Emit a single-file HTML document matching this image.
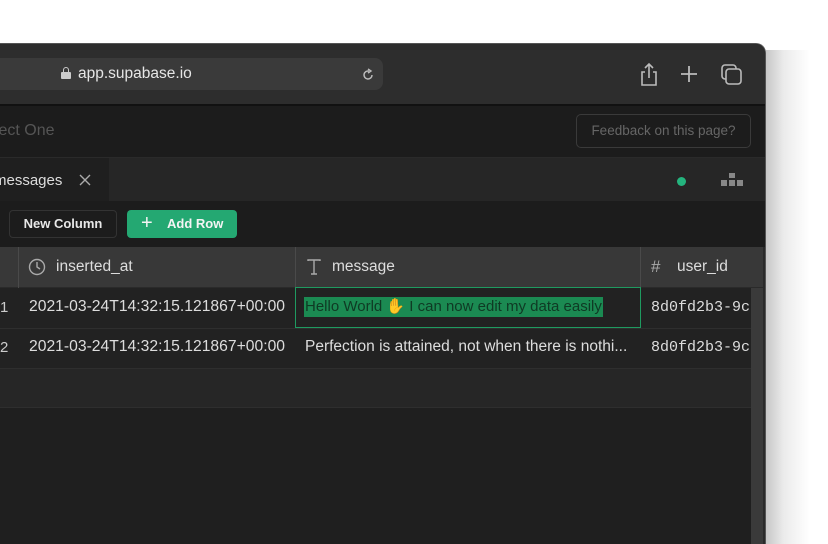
<!DOCTYPE html>
<html><head><meta charset="utf-8"><style>
*{margin:0;padding:0;box-sizing:border-box}
html,body{width:828px;height:544px;overflow:hidden}
body{background:#fff;position:relative;font-family:"Liberation Sans",sans-serif}
.win{position:absolute;left:-21px;top:43px;width:787px;height:501px;background:#1f1f1f;border-top-right-radius:10px;border:1px solid #555;border-bottom:none;overflow:hidden}
.abs{position:absolute}
</style></head><body>
<div class="abs" style="left:766px;top:50px;width:44px;height:494px;background:linear-gradient(90deg,rgba(0,0,0,.22),rgba(0,0,0,.08) 40%,rgba(0,0,0,0))"></div>
<div class="win">
 <div class="abs" style="left:0;top:0;width:786px;height:60px;background:#2d2d2d"></div>
 <div class="abs" style="left:0;top:14px;width:403px;height:32px;background:#3a3a3a;border-radius:8px"></div>
 <div class="abs" style="left:81px;top:23px;width:10px;height:12px">
  <div class="abs" style="left:2px;top:0;width:6px;height:7px;border:1.5px solid #ccc;border-radius:3px 3px 0 0"></div>
  <div class="abs" style="left:0;top:5px;width:10px;height:7px;background:#ccc;border-radius:1px"></div>
 </div>
 <div class="abs" style="left:98px;top:21px;color:#e6e6e6;font-size:15.5px">app.supabase.io</div>
 <svg class="abs" style="left:381px;top:24px" width="14" height="14" viewBox="0 0 14 14"><path d="M11 7A4 4 0 1 1 8 3.1" fill="none" stroke="#bbb" stroke-width="1.5"/><path d="M7 1l3 2-3 2" fill="none" stroke="#bbb" stroke-width="1.4"/></svg>
 <svg class="abs" style="left:659px;top:18px" width="20" height="26" viewBox="0 0 20 26"><path d="M6 10H3v13h14V10h-3M10 2v14M6 6l4-4 4 4" fill="none" stroke="#bbb" stroke-width="1.6"/></svg>
 <svg class="abs" style="left:700px;top:21px" width="18" height="18"><path d="M9 1v16M1 9h16" stroke="#bbb" stroke-width="1.8"/></svg>
 <svg class="abs" style="left:741px;top:20px" width="22" height="22"><rect x="1" y="1" width="14" height="14" rx="3" fill="none" stroke="#bbb" stroke-width="1.6"/><rect x="5" y="5" width="15" height="15" rx="3" fill="#2d2d2d" stroke="#bbb" stroke-width="1.6"/></svg>
 <div class="abs" style="left:0;top:60px;width:786px;height:2px;background:#111"></div>
 <div class="abs" style="left:0;top:62px;width:786px;height:52px;background:#1c1c1c;border-bottom:1px solid #2a2a2a"></div>
 <div class="abs" style="left:-10px;top:78px;color:#555;font-size:16px">Project One</div>
 <div class="abs" style="left:596px;top:70px;width:175px;height:34px;border:1px solid #3a3a3a;border-radius:5px;color:#666;font-size:13.5px;line-height:32px;text-align:center">Feedback on this page?</div>
 <div class="abs" style="left:0;top:114px;width:786px;height:43px;background:#262626"></div>
 <div class="abs" style="left:0;top:114px;width:129px;height:43px;background:#1f1f1f"></div>
 <div class="abs" style="left:14px;top:128px;color:#ddd;font-size:15px">messages</div>
 <svg class="abs" style="left:99px;top:130px" width="12" height="12"><path d="M1 1l10 10M11 1L1 11" stroke="#aaa" stroke-width="1.4"/></svg>
 <div class="abs" style="left:697px;top:133px;width:9px;height:9px;border-radius:50%;background:#24b47e"></div>
 <svg class="abs" style="left:740px;top:128px" width="24" height="16"><g fill="#888"><rect x="9" y="1" width="6" height="5"/><rect x="1" y="8" width="6" height="6"/><rect x="9" y="8" width="6" height="6"/><rect x="17" y="8" width="6" height="6"/></g></svg>
 <div class="abs" style="left:0;top:157px;width:786px;height:46px;background:#1c1c1c"></div>
 <div class="abs" style="left:29px;top:166px;width:108px;height:28px;border:1px solid #333;border-radius:4px;color:#e8e8e8;font-size:13px;font-weight:bold;line-height:26px;text-align:center">New Column</div>
 <div class="abs" style="left:147px;top:166px;width:110px;height:28px;background:#24a872;border-radius:4px;color:#f4f4f4;font-size:13px;font-weight:bold;line-height:28px"><span style="position:absolute;left:14px;top:-1px;font-size:20px;font-weight:normal">+</span><span style="position:absolute;left:40px">Add Row</span></div>
 <div class="abs" style="left:0;top:203px;width:783px;height:41px;background:#383838;border-bottom:1px solid #2a2a2a"></div>
 <div class="abs" style="left:38px;top:203px;width:1px;height:121px;background:#4a4a4a"></div>
 <div class="abs" style="left:315px;top:203px;width:1px;height:121px;background:#4a4a4a"></div>
 <div class="abs" style="left:660px;top:203px;width:1px;height:121px;background:#4a4a4a"></div>
 <svg class="abs" style="left:48px;top:214px" width="18" height="18"><circle cx="9" cy="9" r="7.5" fill="none" stroke="#aaa" stroke-width="1.4"/><path d="M9 4v5l3 2" fill="none" stroke="#aaa" stroke-width="1.4"/></svg>
 <div class="abs" style="left:76px;top:214px;color:#ddd;font-size:15.5px">inserted_at</div>
 <svg class="abs" style="left:327px;top:215px" width="14" height="16"><path d="M1 2V1h12v1M7 1v14M4 15h6" fill="none" stroke="#aaa" stroke-width="1.4"/></svg>
 <div class="abs" style="left:352px;top:214px;color:#ddd;font-size:15.5px">message</div>
 <div class="abs" style="left:671px;top:213px;color:#aaa;font-size:17px">#</div>
 <div class="abs" style="left:697px;top:214px;color:#ddd;font-size:15.5px">user_id</div>
 <div class="abs" style="left:0;top:244px;width:771px;height:80px;background:#222"></div>
 <div class="abs" style="left:0;top:284px;width:771px;height:1px;background:#2e2e2e"></div>
 <div class="abs" style="left:0;top:324px;width:771px;height:40px;background:#262626;border-top:1px solid #2e2e2e;border-bottom:1px solid #2e2e2e"></div>
 <div class="abs" style="left:783px;top:203px;width:3px;height:298px;background:#2a2a2a"></div>
 <div class="abs" style="left:771px;top:244px;width:12px;height:257px;background:#3a3a3a"></div>
 <div class="abs" style="left:20px;top:255px;color:#ccc;font-size:15px">1</div>
 <div class="abs" style="left:20px;top:295px;color:#ccc;font-size:15px">2</div>
 <div class="abs" style="left:49px;top:254px;color:#ddd;font-size:15.7px">2021-03-24T14:32:15.121867+00:00</div>
 <div class="abs" style="left:49px;top:294px;color:#ddd;font-size:15.7px">2021-03-24T14:32:15.121867+00:00</div>
 <div class="abs" style="left:315px;top:243px;width:346px;height:41px;border:1px solid #1f9a60"></div>
 <div class="abs" style="left:324px;top:253px;height:20px;background:#1b8a52;color:#0f3a24;font-size:15px;line-height:20px;padding:0 1px;white-space:nowrap">Hello World <span style="color:#e0a820">✋</span> I can now edit my data easily</div>
 <div class="abs" style="left:325px;top:294px;color:#ddd;font-size:15.5px;white-space:nowrap">Perfection is attained, not when there is nothi...</div>
 <div class="abs" style="left:671px;top:255px;color:#ddd;font-size:15px;font-family:'Liberation Mono',monospace;width:100px;overflow:hidden;white-space:nowrap">8d0fd2b3-9c</div>
 <div class="abs" style="left:671px;top:295px;color:#ddd;font-size:15px;font-family:'Liberation Mono',monospace;width:100px;overflow:hidden;white-space:nowrap">8d0fd2b3-9c</div>
</div>
</body></html>
